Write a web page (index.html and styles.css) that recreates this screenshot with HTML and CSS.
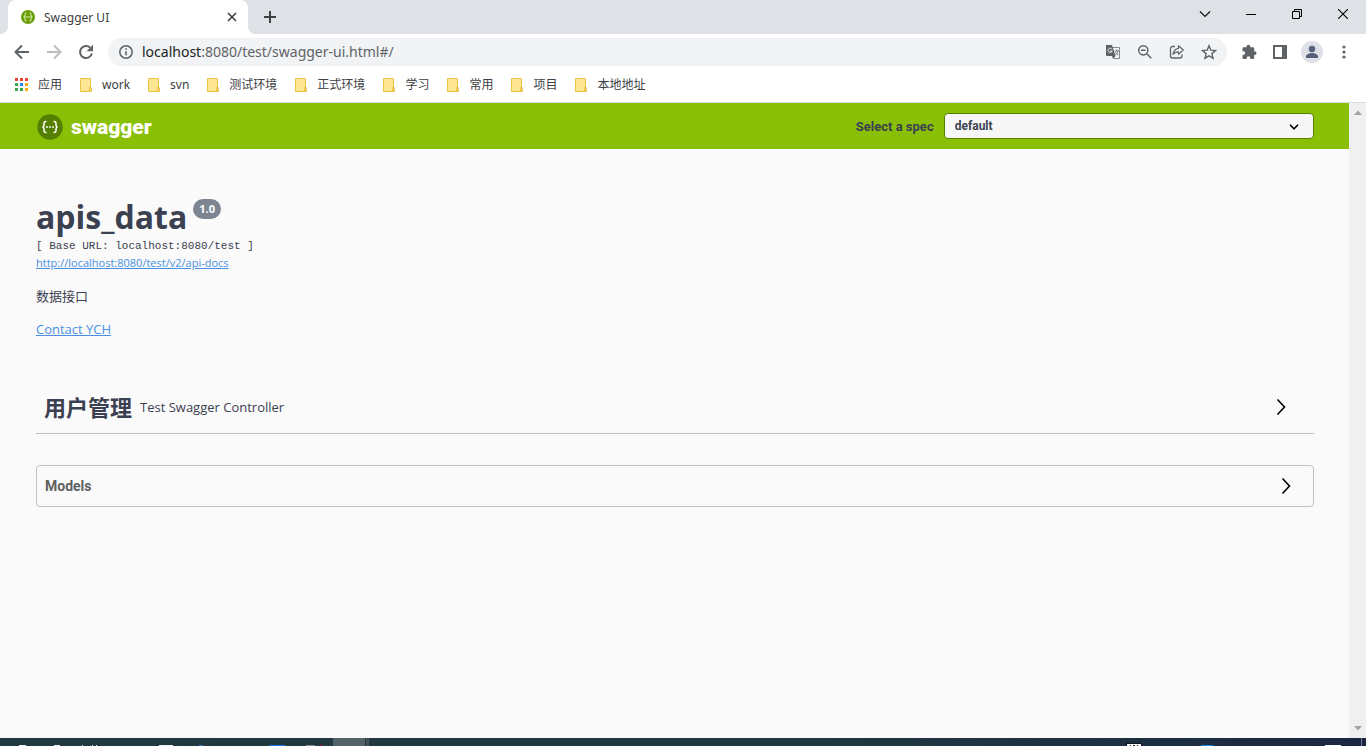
FILE: index.html
```html
<!DOCTYPE html>
<html lang="zh-CN">
<head>
<meta charset="utf-8">
<title>Swagger UI</title>
<link rel="stylesheet" href="styles.css">
</head>
<body>
<svg class="defs" width="0" height="0" aria-hidden="true">
  <symbol id="folder" viewBox="0 0 12 14">
    <path d="M.5.5h10v9.500h1v3.500H.5z" fill="#ffe694" stroke="#e9c446"/>
    <path d="M9.500 13v-3.500h1.500v3.500" fill="#ffe694" stroke="#e9c446"/>
  </symbol>
  <symbol id="chevron" viewBox="0 0 20 20">
    <path d="M6.500 2.500l7 7.500-7 7.500" fill="none" stroke="#000" stroke-width="1.600"/>
  </symbol>
</svg>

<header class="tabstrip">
  <div class="tab">
    <svg class="favicon" viewBox="0 0 14 14"><circle cx="7" cy="7" r="7" fill="#6a9e05"/><path d="M5.500 3H5c-1 0-1 1-1 2s0 1.500-1 2c1 .5 1 1 1 2s0 2 1 2h.5M8.500 3H9c1 0 1 1 1 2s0 1.500 1 2c-1 .5-1 1-1 2s0 2-1 2h-.5M4.500 7h5" fill="none" stroke="#d5ecb0" stroke-width="1.100"/></svg>
    <span class="tab-title">Swagger UI</span>
    <button class="tab-close" aria-label="Close tab"><svg width="10" height="10" viewBox="0 0 10 10"><path d="M1 1l8 8M9 1l-8 8" stroke="#3c4043" stroke-width="1.600"/></svg></button>
  </div>
  <button class="new-tab" aria-label="New tab"><svg width="12" height="12" viewBox="0 0 12 12"><path d="M6 0v12M0 6h12" stroke="#3c4043" stroke-width="2"/></svg></button>
  <div class="window-controls">
    <button aria-label="Search tabs"><svg width="12" height="12" viewBox="0 0 12 12"><path d="M1 3.500l5 5 5-5" fill="none" stroke="#111" stroke-width="1.200"/></svg></button>
    <button aria-label="Minimize"><svg width="10" height="12" viewBox="0 0 10 12"><path d="M0 6.500h10" stroke="#000"/></svg></button>
    <button aria-label="Restore"><svg width="10" height="10" viewBox="0 0 10 10"><path d="M.5 2.500h7v7h-7zM2.500 2.500v-2h7v7h-2" fill="none" stroke="#000"/></svg></button>
    <button aria-label="Close"><svg width="10" height="10" viewBox="0 0 10 10"><path d="M0 0l10 10M10 0L0 10" stroke="#000" stroke-width="1.100"/></svg></button>
  </div>
</header>

<nav class="toolbar">
  <div class="nav-buttons">
    <button aria-label="Back"><svg width="16" height="16" viewBox="0 0 16 16"><path d="M15 8H2M8 1.500L1.500 8 8 14.500" fill="none" stroke="#5f6368" stroke-width="2"/></svg></button>
    <button aria-label="Forward"><svg width="16" height="16" viewBox="0 0 16 16"><path d="M1 8h13M8 1.500L14.500 8 8 14.500" fill="none" stroke="#babcbe" stroke-width="2"/></svg></button>
    <button aria-label="Reload"><svg width="16" height="16" viewBox="0 0 16 16"><path d="M13.900 9.500A6 6 0 1 1 12.300 3.800" fill="none" stroke="#5f6368" stroke-width="2"/><path d="M15 .8v6.400H8.600z" fill="#5f6368"/></svg></button>
  </div>
  <div class="omnibox">
    <svg width="16" height="16" viewBox="0 0 16 16"><circle cx="8" cy="8" r="6.200" fill="none" stroke="#5f6368" stroke-width="1.500"/><path d="M8 7.200v4M8 4.200v1.600" stroke="#5f6368" stroke-width="1.600"/></svg>
    <span class="url" role="textbox" aria-label="Address"><span class="host">localhost</span>:8080/test/swagger-ui.html#/</span>
    <div class="page-actions">
      <button aria-label="Translate"><svg width="16" height="16" viewBox="0 0 16 16"><path d="M7 3.500h7.500v11H8.500" fill="#f1f3f4" stroke="#85888c"/><path d="M1 1h6l3.500 11H2a1 1 0 0 1-1-1z" fill="#5f6368"/><path d="M7 12l1 3 2.500-3z" fill="#5f6368"/><path d="M7 5.300A2.100 2.100 0 1 0 7.200 7H5.200" fill="none" stroke="#f1f3f4"/><path d="M9.500 7H14M11.700 5.500V7M13 7c-.4 2-1.500 3-2.700 4M10.500 8.200c.5 1.300 1.500 2.200 2.700 2.800" fill="none" stroke="#6b6f73" stroke-width=".9"/></svg></button>
      <button aria-label="Zoom"><svg width="16" height="16" viewBox="0 0 16 16"><circle cx="6.300" cy="6.300" r="4.600" fill="none" stroke="#5f6368" stroke-width="1.500"/><path d="M4 6.300h4.600M9.700 9.700l4.600 4.600" stroke="#5f6368" stroke-width="1.500"/></svg></button>
      <button aria-label="Share"><svg width="16" height="16" viewBox="0 0 16 16"><path d="M6 2.500H3.500a2 2 0 0 0-2 2v7.500a2 2 0 0 0 2 2H11a2 2 0 0 0 2-2v-1.500" fill="none" stroke="#5f6368" stroke-width="1.300"/><path d="M9.500 1.800l4.800 4.200-4.800 4.200V7.800C7 7.800 5.300 8.500 4 10.300c.4-3.200 2.300-5.600 5.500-6z" fill="none" stroke="#5f6368" stroke-width="1.200" stroke-linejoin="round"/></svg></button>
      <button aria-label="Bookmark"><svg width="16" height="16" viewBox="0 0 16 16"><path d="M8 1.800l1.800 4.300 4.700.4-3.600 3.100 1.100 4.600L8 11.800l-4 2.400 1.100-4.600-3.600-3.100 4.700-.4z" fill="none" stroke="#5f6368" stroke-width="1.400"/></svg></button>
    </div>
  </div>
  <div class="browser-actions">
    <button aria-label="Extensions"><svg width="16" height="16" viewBox="0 0 16 16"><path d="M1.500 4.500a1.200 1.200 0 0 1 1.200-1.200h2.800V2.700a1.900 1.900 0 0 1 3.800 0v.6h2.700a1.200 1.200 0 0 1 1.200 1.200v2.700h.4a1.900 1.900 0 0 1 0 3.800h-.4v2.800a1.200 1.200 0 0 1-1.200 1.200H9.300V14a1.800 1.800 0 0 0-3.600 0v1H2.700a1.200 1.200 0 0 1-1.200-1.200v-2.900h.9a1.800 1.800 0 0 0 0-3.600h-.9z" fill="#5f6368"/></svg></button>
    <button aria-label="Side panel"><svg width="14" height="14" viewBox="0 0 14 14"><path d="M0 0h14v14H0zM2 2v10h7V2z" fill="#5f6368" fill-rule="evenodd"/></svg></button>
    <button class="avatar" aria-label="Profile"><svg width="22" height="22" viewBox="0 0 22 22"><circle cx="11" cy="8" r="3.200" fill="#56617a"/><path d="M5 17v-1.500c0-2.300 3.500-3.500 6-3.500s6 1.200 6 3.500V17z" fill="#56617a"/></svg></button>
    <button aria-label="Menu"><svg width="4" height="14" viewBox="0 0 4 14"><g fill="#5f6368"><circle cx="2" cy="2" r="1.600"/><circle cx="2" cy="7" r="1.600"/><circle cx="2" cy="12" r="1.600"/></g></svg></button>
  </div>
</nav>

<nav class="bookmarks" aria-label="Bookmarks">
  <a href="#"><svg width="13" height="13" viewBox="0 0 13 13"><path d="M0 0h3v3H0zM5 0h3v3H5zM10 0h3v3h-3z" fill="#ea4335"/><path d="M0 5h3v3H0zM0 10h3v3H0zM5 10h3v3H5z" fill="#34a853"/><path d="M5 5h3v3H5z" fill="#2684fc"/><path d="M10 5h3v3h-3zM10 10h3v3h-3z" fill="#fbab05"/></svg>应用</a>
  <a href="#"><svg width="12" height="14"><use href="#folder"/></svg>work</a>
  <a href="#"><svg width="12" height="14"><use href="#folder"/></svg>svn</a>
  <a href="#"><svg width="12" height="14"><use href="#folder"/></svg>测试环境</a>
  <a href="#"><svg width="12" height="14"><use href="#folder"/></svg>正式环境</a>
  <a href="#"><svg width="12" height="14"><use href="#folder"/></svg>学习</a>
  <a href="#"><svg width="12" height="14"><use href="#folder"/></svg>常用</a>
  <a href="#"><svg width="12" height="14"><use href="#folder"/></svg>项目</a>
  <a href="#"><svg width="12" height="14"><use href="#folder"/></svg>本地地址</a>
</nav>

<div class="viewport">
  <main class="page">
    <div class="topbar">
      <a class="brand" href="#">
        <svg width="26" height="26" viewBox="0 0 26 26"><circle cx="13" cy="13" r="12.700" fill="#547f00"/><path d="M9.500 7.500H9c-1.500 0-2 .8-2 2v1.500c0 1.200-.3 1.800-1.500 2 1.200.2 1.500.8 1.500 2v1.500c0 1.200.5 2 2 2h.5M16.500 7.500h.5c1.500 0 2 .8 2 2v1.500c0 1.200.3 1.800 1.500 2-1.200.2-1.500.8-1.500 2v1.500c0 1.200-.5 2-2 2h-.5" fill="none" stroke="#fff" stroke-width="1.500"/><g fill="#fff"><circle cx="10" cy="13" r=".9"/><circle cx="13" cy="13" r=".9"/><circle cx="16" cy="13" r=".9"/></g></svg>
        <span>swagger</span>
      </a>
      <label for="spec">Select a spec</label>
      <div class="select-box">
        <select id="spec"><option>default</option></select>
        <svg class="caret" width="10" height="6" viewBox="0 0 10 6"><path d="M1 .8l4 4 4-4" fill="none" stroke="#000" stroke-width="1.600"/></svg>
      </div>
    </div>

    <section class="info">
      <h1>apis_data<span class="version">1.0</span></h1>
      <pre class="base-url">[ Base URL: localhost:8080/test ]</pre>
      <a class="docs" href="#">http://localhost:8080/test/v2/api-docs</a>
      <p class="description">数据接口</p>
      <a class="contact" href="#">Contact YCH</a>
    </section>

    <section class="tag">
      <h2>用户管理</h2>
      <span class="tag-text">Test Swagger Controller</span>
      <button aria-label="Expand operations"><svg width="20" height="20"><use href="#chevron"/></svg></button>
    </section>

    <section class="models">
      <h3>Models</h3>
      <button aria-label="Expand models"><svg width="20" height="20"><use href="#chevron"/></svg></button>
    </section>
  </main>
  <div class="scrollbar" aria-hidden="true">
    <svg width="8" height="5" viewBox="0 0 8 5"><path d="M0 5l4-4.500L8 5z" fill="#a3a3a3"/></svg>
    <svg width="8" height="5" viewBox="0 0 8 5"><path d="M0 0l4 4.500L8 0z" fill="#a3a3a3"/></svg>
  </div>
</div>

<footer class="taskbar" aria-hidden="true">
  <svg width="400" height="8" viewBox="0 0 400 8"><path d="M333 0h32v8h-32z" fill="#53656b"/><path d="M366 0h3v8h-3z" fill="#435359"/><path d="M19 7h7v1h-7zM54 7h6v1h-6zM82 7h1v1h-1zM92 7h1v1h-1zM96 7h1v1h-1zM159 7h14v1h-14z" fill="#e8eaec"/><path d="M199 7h4v1h-4z" fill="#3e73d8"/><path d="M269 7h16v1h-16z" fill="#187bea"/><path d="M306 7h9v1h-9z" fill="#888"/><path d="M320 7h2v1h-2z" fill="#b00020"/></svg>
  <svg width="300" height="8" viewBox="0 0 300 8"><path d="M60 5h16v3H60z" fill="#0c1522"/><path d="M61 6h14v2H61z" fill="#fff"/><path d="M64 7h1v1h-1zM67 7h2v1h-2zM71 7h1v1h-1z" fill="#222"/><path d="M135 7h12v1h-12z" fill="#1c8de8"/><path d="M259 7h16v1h-16z" fill="#fff"/><path d="M295 0h1v8h-1z" fill="#6c7a8b"/></svg>
</footer>
</body>
</html>
```
FILE: styles.css
```css
* { box-sizing: border-box; }

body {
  margin: 0;
  height: 100vh;
  display: flex;
  flex-direction: column;
  overflow: hidden;
  background: #fff;
  color: #3b4151;
  font-family: "Open Sans", "Noto Sans CJK SC", sans-serif;
}

button {
  display: flex;
  align-items: center;
  justify-content: center;
  padding: 0;
  border: 0;
  background: none;
}

svg { display: block; flex: none; }
.defs { position: absolute; }
h1, h2, h3, p, pre { margin: 0; }

.tabstrip,
.toolbar,
.bookmarks {
  font-family: "Noto Sans", "Noto Sans CJK SC", sans-serif;
}

/* Tab strip */
.tabstrip {
  display: flex;
  height: 34px;
  flex: none;
  padding-left: 8px;
  background: #dee1e6;
}
.tab {
  position: relative;
  display: flex;
  align-items: center;
  width: 240px;
  padding: 0 10px 0 13px;
  border-radius: 8px 8px 0 0;
  background: #fff;
}
.tab::before,
.tab::after {
  content: "";
  position: absolute;
  bottom: 0;
  width: 8px;
  height: 8px;
}
.tab::before {
  right: 100%;
  background: radial-gradient(circle at 0 0, #dee1e6 8px, #fff 8px);
}
.tab::after {
  left: 100%;
  background: radial-gradient(circle at 100% 0, #dee1e6 8px, #fff 8px);
}
.favicon { width: 14px; height: 14px; }
.tab-title {
  flex: 1;
  margin-left: 9px;
  color: #3c4043;
  font-size: 12px;
}
.tab-close { width: 12px; height: 16px; }
.new-tab { width: 28px; margin-left: 8px; }
.window-controls { display: flex; margin-left: auto; padding-bottom: 6px; }
.window-controls button { width: 46px; }

/* Toolbar */
.toolbar {
  display: flex;
  align-items: center;
  height: 36px;
  flex: none;
  padding: 0 12px 0 14px;
}
.nav-buttons { display: flex; gap: 16px; margin-right: 14px; }
.omnibox {
  display: flex;
  flex: 1;
  align-items: center;
  height: 28px;
  padding: 0 10px;
  border-radius: 14px;
  background: #f1f3f4;
}
.url {
  flex: 1;
  margin-left: 8px;
  color: #5f6368;
  font-size: 14px;
  line-height: 20px;
}
.host { color: #202124; }
.page-actions { display: flex; gap: 16px; }
.browser-actions { display: flex; align-items: center; gap: 11px; margin-left: 12px; }
.browser-actions button { width: 20px; height: 22px; }
.browser-actions .avatar { width: 22px; border-radius: 50%; background: #dee1e6; }

/* Bookmarks */
.bookmarks {
  display: flex;
  align-items: center;
  gap: 18px;
  height: 33px;
  flex: none;
  padding: 0 15px 3px;
  border-bottom: 1px solid #dadce0;
}
.bookmarks a {
  display: flex;
  align-items: center;
  gap: 10px;
  color: #3c4043;
  font-size: 12px;
  line-height: 18px;
  text-decoration: none;
  white-space: nowrap;
}

/* Page */
.viewport { display: flex; flex: 1; min-height: 0; }
.page { flex: 1; background: #fafafa; }
.scrollbar {
  display: flex;
  flex-direction: column;
  align-items: center;
  justify-content: space-between;
  width: 17px;
  padding: 7px 0;
  background: #f0f0f0;
}
.topbar {
  display: flex;
  align-items: center;
  height: 46px;
  padding: 0 35px 0 37px;
  background: #89bf04;
}
.brand {
  display: flex;
  align-items: center;
  gap: 8px;
  margin-right: auto;
  padding-top: 2px;
  color: #fff;
  font-family: Roboto, sans-serif;
  font-size: 21px;
  font-weight: 900;
  line-height: 26px;
  text-decoration: none;
}
.topbar label {
  margin-right: 10px;
  font-family: Roboto, sans-serif;
  font-size: 13px;
  font-weight: 700;
}
.select-box { position: relative; width: 29%; flex: none; }
.select-box select {
  display: block;
  width: 100%;
  height: 26px;
  padding: 0 40px 0 10px;
  border: 1px solid #547f00;
  border-radius: 4px;
  background: #f7f7f7;
  color: #3b4151;
  font-family: Roboto, sans-serif;
  font-size: 12px;
  font-weight: 700;
  appearance: none;
}
.caret { position: absolute; right: 15px; top: 11px; }

.info { padding: 46px 36px 0; }
.info h1 {
  display: flex;
  align-items: flex-start;
  font-size: 32px;
  line-height: 44px;
}
.version {
  margin: 4px 0 0 6px;
  padding: 0 6px;
  border-radius: 10px;
  background: #7d8492;
  color: #fff;
  font-size: 11px;
  line-height: 20px;
}
.base-url {
  font-family: "Liberation Mono", monospace;
  font-size: 11px;
  line-height: 14px;
}
.info a { color: #4990e2; }
.docs { display: block; font-size: 11px; line-height: 20px; }
.description { margin-top: 13px; font-size: 13px; line-height: 20px; }
.contact { display: block; margin-top: 13px; font-size: 13px; line-height: 20px; }

.tag {
  display: flex;
  align-items: center;
  height: 52px;
  margin: 43px 35px 0 36px;
  padding: 0 23px 2px 8px;
  border-bottom: 1px solid #bfc1c5;
}
.tag h2 { font-size: 22px; line-height: 32px; }
.tag-text { margin-left: 8px; font-size: 13px; }
.tag button { margin-left: auto; }

.models {
  display: flex;
  align-items: center;
  justify-content: space-between;
  height: 42px;
  margin: 31px 35px 0 36px;
  padding: 0 17px 0 8px;
  border: 1px solid #bfc1c5;
  border-radius: 4px;
}
.models h3 {
  color: #606060;
  font-family: Roboto, sans-serif;
  font-size: 14px;
}

/* Taskbar */
.taskbar {
  display: flex;
  justify-content: space-between;
  height: 8px;
  flex: none;
  background: linear-gradient(90deg, #22393f, #203840 60%, #1b2742);
}
```
